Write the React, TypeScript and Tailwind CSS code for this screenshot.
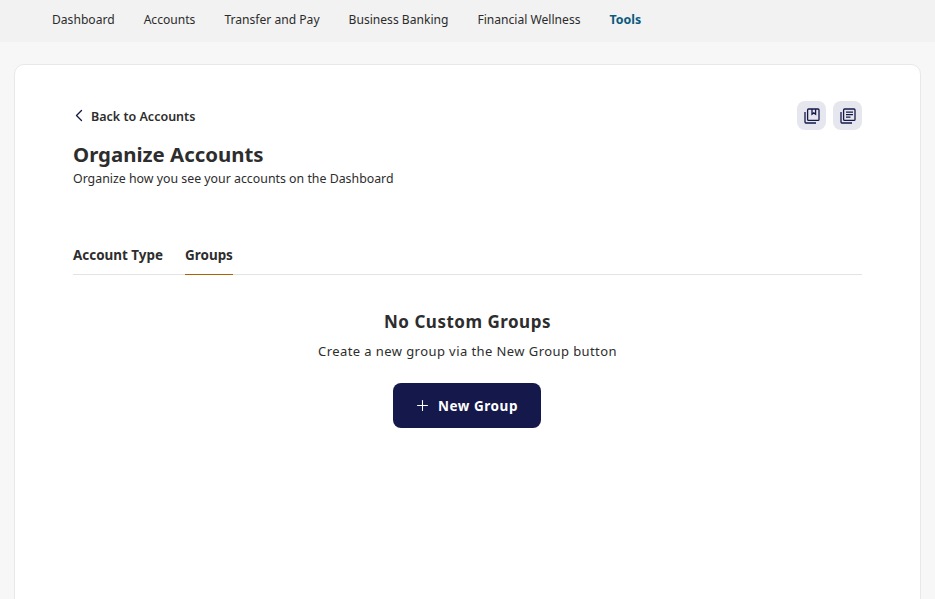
import React from 'react';
import { ChevronLeft, Plus } from 'lucide-react';

const navItems = ['Dashboard', 'Accounts', 'Transfer and Pay', 'Business Banking', 'Financial Wellness'];

const BookmarkStack: React.FC = () => (
  <svg width="16" height="16" viewBox="0 0 16 16" fill="none" stroke="#14184a" strokeWidth="1.3">
    <path d="M1 4v10a1 1 0 0 0 1 1h10" />
    <rect x="3.6" y="1" width="11.4" height="11.4" rx="1" />
    <path d="M8 1v5.2l1.8-1.3 1.8 1.3V1" />
  </svg>
);

const NotesStack: React.FC = () => (
  <svg width="16" height="16" viewBox="0 0 16 16" fill="none" stroke="#14184a" strokeWidth="1.3">
    <path d="M1 4v10a1 1 0 0 0 1 1h10" />
    <rect x="3.6" y="1" width="11.4" height="11.4" rx="1" />
    <path d="M6 4.2h7M6 6.7h7M6 9.2h4.5" />
  </svg>
);

const App: React.FC = () => {
  return (
    <div className="h-[599px] overflow-hidden bg-[#f7f7f7] font-['Noto_Sans','Open_Sans',sans-serif] text-[#2d2d2d]">
      <nav className="flex h-[42px] items-center gap-[29px] bg-[#f2f2f2] pl-[52px] pb-[2px] text-[12.1px]">
        {navItems.map(item => (
          <a key={item} className="text-[#2b2b2b]">{item}</a>
        ))}
        <a className="text-[12.4px] font-bold text-[#0b5a80]">Tools</a>
      </nav>

      <main className="mx-[14px] mt-[22px] h-[600px] rounded-t-[10px] border border-[#e8e8e8] bg-white px-[58px] pt-[36px]">
        <div className="flex items-start justify-between">
          <div>
            <a className="-ml-[4px] flex h-[30px] items-center gap-[2px] pt-[2px] text-[12.5px] font-semibold">
              <ChevronLeft className="h-[20px] w-[20px] -translate-y-[1.5px] text-[#14184a]" strokeWidth={1.6} />
              Back to Accounts
            </a>
            <h1 className="mt-[8px] text-[20.4px] leading-[30px] font-bold">Organize Accounts</h1>
            <p className="pt-[1px] text-[12.35px] leading-[18px]">Organize how you see your accounts on the Dashboard</p>
          </div>
          <div className="flex gap-[7px]">
            <button className="flex h-[29px] w-[29px] items-center justify-center rounded-[8px] bg-[#e6e6ee]">
              <BookmarkStack />
            </button>
            <button className="flex h-[29px] w-[29px] items-center justify-center rounded-[8px] bg-[#e6e6ee]">
              <NotesStack />
            </button>
          </div>
        </div>

        <div className="mt-[46px] flex gap-[22px] border-b border-[#e3e3e3] text-[13.45px] font-bold">
          <button className="h-[40px] pt-[2px]">Account Type</button>
          <button className="-mb-px h-[41px] border-b border-[#a66500] pt-[2px]">Groups</button>
        </div>

        <section className="flex flex-col items-center">
          <h2 className="mt-[34px] text-[17px] leading-[26px] font-bold tracking-[0.5px]">No Custom Groups</h2>
          <p className="mt-[7px] text-[13px] leading-[18px] tracking-[0.42px]">Create a new group via the New Group button</p>
          <button className="mt-[23px] mr-[1px] flex h-[45px] w-[148px] items-center justify-center gap-[7px] rounded-[8px] bg-[#14184a] pt-[1px] pr-[2px] text-[13.5px] font-bold tracking-[0.55px] text-white">
            <Plus className="h-[17px] w-[17px] -translate-y-[1px]" strokeWidth={1.5} />
            New Group
          </button>
        </section>
      </main>
    </div>
  );
};

export default App;
